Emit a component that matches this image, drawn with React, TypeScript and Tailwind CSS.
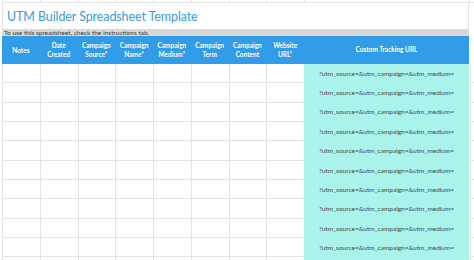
const cols = [
  ['Notes'],
  ['Date', 'Created'],
  ['Campaign', 'Source*'],
  ['Campaign', 'Name*'],
  ['Campaign', 'Medium*'],
  ['Campaign', 'Term'],
  ['Campaign', 'Content'],
  ['Website', 'URL*'],
]

const grid = 'grid grid-cols-[repeat(8,37.75px)_165px_1fr]'

export default function App() {
  const rows = Array.from({ length: 11 })
  return (
    <div className="w-[474px] h-[260px] overflow-hidden bg-white pl-[2px] font-['Lato','Liberation_Sans',sans-serif]">
      {/* top strip */}
      <div className={`${grid} h-[3px] border-b border-[#e4e4e4]`}>
        {Array.from({ length: 10 }).map((_, i) => (
          <div key={i} className="border-l border-[#e4e4e4]" />
        ))}
      </div>

      {/* title */}
      <div className="flex h-[26px]">
        <div className="w-[467px] border-l border-r border-[#e4e4e4] pl-[4px] pt-[7px] text-[12.5px] leading-[14px] text-[#3c9bdb] tracking-[-0.1px]">
          UTM Builder Spreadsheet Template
        </div>
      </div>

      {/* instructions bar */}
      <div className="w-[467px] h-[7px] bg-[#d8d8d8] pl-[2px] text-[6.5px] leading-[7px] text-[#3a3a3a]">
        To use this spreadsheet, check the Instructions tab.
      </div>

      {/* header */}
      <div className={`${grid} h-[28px]`}>
        {cols.map((c, i) => (
          <div
            key={i}
            className="bg-[#319ce8] flex flex-col items-center justify-center text-white font-bold text-[6.5px] leading-[9px]"
          >
            {c.map((l) => (
              <span key={l}>{l}</span>
            ))}
          </div>
        ))}
        <div className="bg-[#319ce8] flex items-center justify-center text-white font-bold text-[6.5px]">
          Custom Tracking URL
        </div>
        <div />
      </div>

      {/* data rows */}
      {rows.map((_, r) => (
        <div key={r} className={`${grid} h-[19.35px]`}>
          {Array.from({ length: 8 }).map((_, i) => (
            <div key={i} className="border-l border-b border-[#e4e4e4]" />
          ))}
          <div className="bg-[#a9f3ea] flex items-center justify-center text-[6.5px] text-[#4a4a4a]">
            {r < 10 ? '?utm_source=&utm_campaign=&utm_medium=' : ''}
          </div>
          <div className="border-l border-b border-[#e4e4e4] ml-[1px]" />
        </div>
      ))}
    </div>
  )
}
